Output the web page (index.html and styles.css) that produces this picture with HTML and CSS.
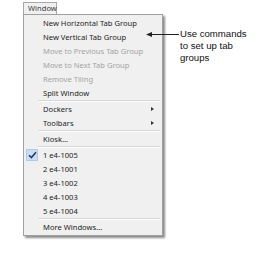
FILE: index.html
```html
<!DOCTYPE html>
<html>
<head>
<meta charset="utf-8">
<link rel="stylesheet" href="styles.css">
</head>
<body>
<div class="stage">
  <div class="tab">Window</div>
  <div class="menu">
    <div class="item">New Horizontal Tab Group</div>
    <div class="item">New Vertical Tab Group</div>
    <div class="item disabled">Move to Previous Tab Group</div>
    <div class="item disabled">Move to Next Tab Group</div>
    <div class="item disabled">Remove Tiling</div>
    <div class="item">Split Window</div>
    <div class="sep"></div>
    <div class="item sub">Dockers<span class="arrow"></span></div>
    <div class="item sub">Toolbars<span class="arrow"></span></div>
    <div class="sep"></div>
    <div class="item">Kiosk...</div>
    <div class="sep"></div>
    <div class="item checked"><span class="check"><svg width="9" height="8" viewBox="0 0 9 8"><path d="M1 4.2 L3.4 6.6 L8 1.2" fill="none" stroke="#2b3a55" stroke-width="1.6"/></svg></span>1 e4-1005</div>
    <div class="item">2 e4-1001</div>
    <div class="item">3 e4-1002</div>
    <div class="item">4 e4-1003</div>
    <div class="item">5 e4-1004</div>
    <div class="sep"></div>
    <div class="item">More Windows...</div>
  </div>
  <div class="callout">
    <svg class="pointer" width="33" height="7" viewBox="0 0 33 7"><path d="M5 3.5 H33" stroke="#222" stroke-width="1"/><path d="M0 3.5 L6 1 L6 6 Z" fill="#222"/></svg>
    <div class="note">Use commands<br>to set up tab<br>groups</div>
  </div>
</div>
</body>
</html>
```
FILE: styles.css
```css
html, body {
  margin: 0;
  padding: 0;
  background: #ffffff;
}
.stage {
  position: relative;
  width: 269px;
  height: 255px;
  font-family: "Noto Sans", "Open Sans", sans-serif;
  font-size: 7.6px;
  color: #1e1e1e;
}
.tab {
  margin: 2px 0 0 23px;
  width: 34px;
  height: 12px;
  box-sizing: border-box;
  border: 1px solid #a8a8a8;
  border-bottom: none;
  background: #f0f0f0;
  color: #3a3a3a;
  padding-left: 4px;
  line-height: 11px;
}
.menu {
  margin-left: 23px;
  width: 140px;
  box-sizing: border-box;
  border: 1px solid #a0a0a0;
  background: #f0f0f0;
  box-shadow: 2px 2px 2px rgba(0, 0, 0, 0.45);
  padding: 1px 0 1px 0;
}
.item {
  position: relative;
  height: 14px;
  line-height: 14px;
  padding-left: 19px;
  white-space: nowrap;
}
.disabled {
  color: #a3a3a3;
}
.sep {
  height: 0;
  margin: 0 2px 0 14px;
  border-top: 1px solid #d7d7d7;
  border-bottom: 1px solid #ffffff;
}
.arrow {
  position: absolute;
  right: 8px;
  top: 5px;
  width: 0;
  height: 0;
  border-left: 3px solid #333;
  border-top: 2px solid transparent;
  border-bottom: 2px solid transparent;
}
.check {
  position: absolute;
  left: 2px;
  top: 1px;
  width: 12px;
  height: 12px;
  box-sizing: border-box;
  background: #c9def5;
  border: 1px solid #aecbee;
  display: flex;
  align-items: center;
  justify-content: center;
}
.callout {
  position: absolute;
  left: 146px;
  top: 26px;
  width: 123px;
  display: flex;
  align-items: flex-start;
}
.pointer {
  flex: none;
  width: 33px;
  margin-top: 3px;
}
.note {
  font-family: "Liberation Sans", Arial, sans-serif;
  font-size: 9.6px;
  line-height: 12px;
  color: #111;
  margin-left: 1px;
}
```
